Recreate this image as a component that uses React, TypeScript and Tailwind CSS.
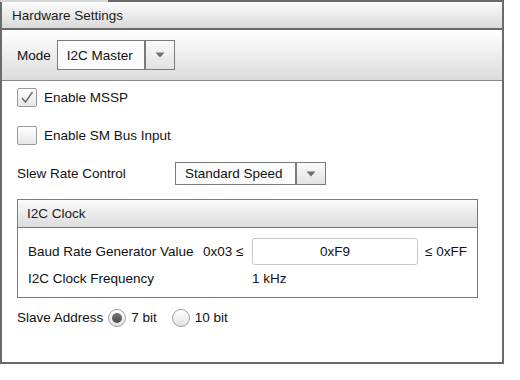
import React, { useState } from 'react';

const font = { fontFamily: '"Liberation Sans", Arial, sans-serif' };

const Caret: React.FC = () => (
  <svg width="10" height="6" viewBox="0 0 10 6">
    <path d="M0.5 0.5 L9.5 0.5 L5 5.5 Z" fill="#6e6e6e" />
  </svg>
);

const Select: React.FC<{ value: string; width: string; height: string }> = ({ value, width, height }) => (
  <div className={`flex ${width} ${height} border border-[#7a7a7a] bg-[#fbfbfb]`}>
    <div className="flex-1 flex items-center pl-[9px] text-[13.5px] text-[#111]">{value}</div>
    <div className="w-[30px] flex items-center justify-center border-l-2 border-[#7a7a7a] bg-gradient-to-b from-[#fafafa] to-[#e2e2e2]">
      <Caret />
    </div>
  </div>
);

const Checkbox: React.FC<{ checked: boolean; label: string; onToggle: () => void }> = ({ checked, label, onToggle }) => (
  <button onClick={onToggle} className="flex items-center gap-[7px] text-[13.5px] leading-[19px] text-[#111]">
    <span className="w-[20px] h-[19px] border border-[#9a9a9a] rounded-[2px] bg-gradient-to-b from-white to-[#e6e6e6] flex items-center justify-center">
      {checked && (
        <svg width="14" height="13" viewBox="0 0 14 13">
          <path d="M2 7 L5.5 11 L12.5 1" fill="none" stroke="#6a6a6a" strokeWidth="1.4" />
        </svg>
      )}
    </span>
    {label}
  </button>
);

const Radio: React.FC<{ checked: boolean; label: string; onSelect: () => void }> = ({ checked, label, onSelect }) => (
  <button onClick={onSelect} className="flex items-center gap-[5px] text-[13.5px] leading-[19px] text-[#111]">
    <span className="w-[18px] h-[18px] rounded-full border border-[#a0a0a0] bg-gradient-to-b from-white to-[#e2e2e2] flex items-center justify-center">
      {checked && <span className="w-[10px] h-[10px] rounded-full bg-gradient-to-b from-[#777] to-[#4a4a4a]" />}
    </span>
    {label}
  </button>
);

export default function App() {
  const [mssp, setMssp] = useState(true);
  const [smBus, setSmBus] = useState(false);
  const [addr, setAddr] = useState<'7' | '10'>('7');

  return (
    <div className="w-[520px] h-[380px] bg-white leading-[19px]" style={font}>
      <div className="relative w-[504px] h-[364px] border-2 border-[#6b6b6b] flex flex-col">
        <div className="absolute -top-[2px] -left-[2px] w-[108px] h-[2px] bg-[#d6d6d6]" />

        <div className="h-[28px] shrink-0 border-b-2 border-[#6b6b6b] bg-gradient-to-b from-[#fcfcfc] to-[#dadada] flex items-center px-[10px] text-[13.5px] text-[#1a1a1a]">
          Hardware Settings
        </div>

        <div className="h-[51px] shrink-0 border-b border-[#8a8a8a] bg-gradient-to-b from-white to-[#dcdcdc] flex items-center pl-[15px] gap-[6px] text-[13.5px] text-[#111]">
          <span>Mode</span>
          <Select value="I2C Master" width="w-[118px]" height="h-[30px]" />
        </div>

        <div className="flex-1 flex flex-col px-[15px]">
          <div className="mt-[7px]">
            <Checkbox checked={mssp} label="Enable MSSP" onToggle={() => setMssp(!mssp)} />
          </div>
          <div className="mt-[19px]">
            <Checkbox checked={smBus} label="Enable SM Bus Input" onToggle={() => setSmBus(!smBus)} />
          </div>

          <div className="mt-[17px] flex items-center text-[13.5px] text-[#111]">
            <span className="w-[158px]">Slew Rate Control</span>
            <Select value="Standard Speed" width="w-[151px]" height="h-[23px]" />
          </div>

          <div className="mt-[14px] w-[461px] h-[99px] border border-[#7a7a7a] flex flex-col">
            <div className="h-[28px] shrink-0 border-b border-[#7a7a7a] bg-gradient-to-b from-[#fbfbfb] to-[#dcdcdc] flex items-center px-[9px] text-[13.5px] text-[#1a1a1a]">
              I2C Clock
            </div>
            <div className="flex flex-col px-[10px] text-[13.5px] text-[#111]">
              <div className="mt-[10px] flex items-center h-[27px]">
                <span className="w-[175px]">Baud Rate Generator Value</span>
                <span className="w-[49px]">0x03 ≤</span>
                <div className="w-[166px] h-[27px] border border-[#c8c8c8] rounded-[3px] flex items-center justify-center">0xF9</div>
                <span className="ml-[7px]">≤ 0xFF</span>
              </div>
              <div className="mt-[1px] flex items-center h-[24px]">
                <span className="w-[224px]">I2C Clock Frequency</span>
                <span>1 kHz</span>
              </div>
            </div>
          </div>

          <div className="mt-[10px] flex items-center text-[13.5px] text-[#111]">
            <span className="mr-[5px]">Slave Address</span>
            <Radio checked={addr === '7'} label="7 bit" onSelect={() => setAddr('7')} />
            <span className="w-[15px]" />
            <Radio checked={addr === '10'} label="10 bit" onSelect={() => setAddr('10')} />
          </div>
        </div>
      </div>
    </div>
  );
}
